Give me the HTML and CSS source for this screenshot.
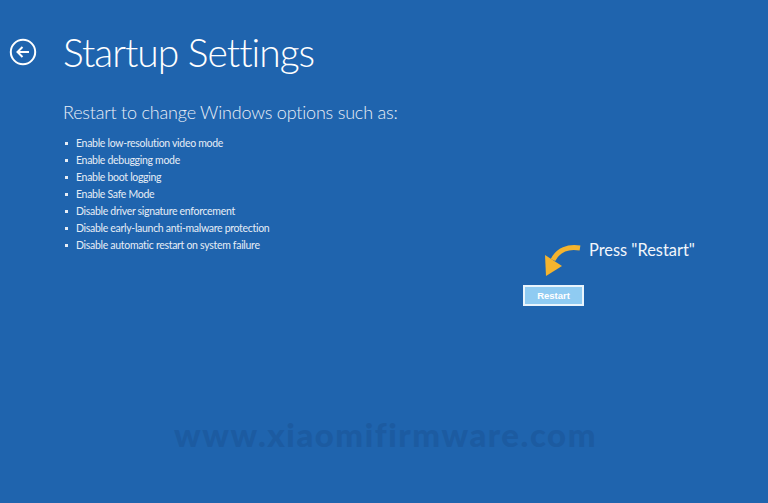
FILE: index.html
```html
<!DOCTYPE html>
<html>
<head>
<meta charset="utf-8">
<link rel="stylesheet" href="styles.css">
</head>
<body>
<div class="screen">
  <header class="head">
    <svg class="back" width="28" height="28" viewBox="0 0 28 28">
      <circle cx="14" cy="14" r="12.2" fill="none" stroke="#fff" stroke-width="2"/>
      <path d="M20 14H8.5M13.5 9L8.5 14L13.5 19" fill="none" stroke="#fff" stroke-width="2"/>
    </svg>
    <h1 class="title">Startup Settings</h1>
  </header>
  <section class="body">
    <p class="sub">Restart to change Windows options such as:</p>
    <ul class="opts">
      <li>Enable low-resolution video mode</li>
      <li>Enable debugging mode</li>
      <li>Enable boot logging</li>
      <li>Enable Safe Mode</li>
      <li>Disable driver signature enforcement</li>
      <li>Disable early-launch anti-malware protection</li>
      <li>Disable automatic restart on system failure</li>
    </ul>
  </section>
  <div class="action">
    <div class="hint">
      <svg class="arrow" width="44" height="40" viewBox="0 0 44 40">
        <path d="M42 10C30 8 20 12 15 22" fill="none" stroke="#f5b42e" stroke-width="5"/>
        <path d="M7 17L8 38L24 28Z" fill="#f5b42e"/>
      </svg>
      <span class="press">Press "Restart"</span>
    </div>
    <button class="restart">Restart</button>
  </div>
  <div class="mark">www.xiaomifirmware.com</div>
</div>
</body>
</html>
```
FILE: styles.css
```css
html, body {
  margin: 0;
  padding: 0;
  width: 768px;
  height: 503px;
  overflow: hidden;
  background: #1f64ae;
}
.screen {
  width: 768px;
  height: 503px;
  background: #1f64ae;
  color: #fff;
  font-family: "Lato", "Open Sans", sans-serif;
  position: relative;
}
.head {
  display: flex;
  align-items: center;
  padding: 24px 0 0 9px;
  height: 56px;
}
.back {
  display: block;
  margin-right: 26px;
}
.title {
  margin: 0;
  font-weight: 300;
  font-size: 39px;
  letter-spacing: -1px;
  line-height: 56px;
}
.body {
  padding-left: 63px;
}
.sub {
  margin: 20px 0 11px;
  font-weight: 300;
  font-size: 18px;
  letter-spacing: -0.2px;
  line-height: 24px;
  color: #e8eef7;
}
.opts {
  margin: 0;
  padding: 0;
  list-style: none;
}
.opts li {
  font-size: 10.5px;
  letter-spacing: -0.3px;
  line-height: 17px;
  color: #e6edf6;
  padding-left: 13px;
  position: relative;
}
.opts li::before {
  content: "";
  position: absolute;
  left: 2px;
  top: 7px;
  width: 3px;
  height: 3px;
  background: #e6edf6;
}
.action {
  position: absolute;
  left: 523px;
  top: 238px;
  width: 200px;
}
.hint {
  display: flex;
  align-items: flex-start;
  margin-left: 15px;
  height: 44px;
}
.arrow {
  display: block;
}
.press {
  font-family: "Lato", "Open Sans", sans-serif;
  font-size: 16.4px;
  line-height: 24px;
  margin-left: 7px;
  color: #f2f6fb;
}
.restart {
  display: block;
  margin-top: 3px;
  width: 61px;
  height: 21px;
  background: #8fcbf2;
  border: 2px solid #e9f4fc;
  color: #fff;
  font-family: "Liberation Sans", sans-serif;
  font-weight: bold;
  font-size: 9.5px;
  padding: 0;
}
.mark {
  position: absolute;
  left: 174px;
  top: 414px;
  font-family: "Lato", sans-serif;
  font-weight: 900;
  font-size: 33px;
  letter-spacing: 1.5px;
  color: #1c5ba1;
}
```
